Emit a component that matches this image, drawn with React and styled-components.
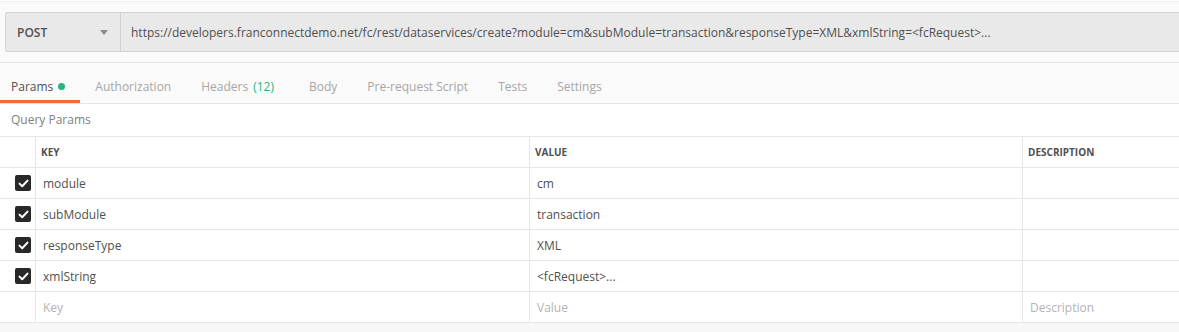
import React from 'react'
import styled, {createGlobalStyle} from 'styled-components'

const GlobalStyle = createGlobalStyle`
  html, body {
    margin: 0;
    padding: 0;
    background: #f7f7f7;
    font-family: "Open Sans", "Liberation Sans", sans-serif;
    color: #505050;
  }
`

const params = [
  {key: 'module', value: 'cm'},
  {key: 'subModule', value: 'transaction'},
  {key: 'responseType', value: 'XML'},
  {key: 'xmlString', value: '<fcRequest>...'},
]

const Page = styled.div`
  width: 1179px;
  display: flex;
  flex-direction: column;
`

const Top = styled.div`
  background: #fafafa;
  border-top: 1px solid #fff;
  box-shadow: inset 0 1px 0 #eeeeee;
  padding: 11px 0 10px 5px;
  border-bottom: 1px solid #e6e6e6;
`

const RequestBar = styled.div`
  display: flex;
  height: 38px;
  border: 1px solid #d2d2d2;
  border-right: none;
  background: #e9e9e9;
  border-radius: 2px 0 0 2px;
`

const Method = styled.div`
  width: 115px;
  display: flex;
  align-items: center;
  justify-content: space-between;
  padding: 0 12px 0 11px;
  box-sizing: border-box;
  border-right: 1px solid #d2d2d2;
  font-size: 12px;
  font-weight: 600;
  color: #505050;
`

const Caret = styled.span`
  width: 0;
  height: 0;
  border-left: 4px solid transparent;
  border-right: 4px solid transparent;
  border-top: 5px solid #8a8a8a;
  margin-top: 1px;
`

const Url = styled.div`
  flex: 1;
  display: flex;
  align-items: center;
  padding-left: 10px;
  font-size: 12px;
  color: #505050;
  white-space: nowrap;
`

const Tabs = styled.div`
  display: flex;
  height: 40px;
  background: #fafafa;
  border-bottom: 1px solid #e6e6e6;
`

const Tab = styled.div`
  display: flex;
  align-items: center;
  gap: 5px;
  padding: 9px 15px 0;
  font-size: 12px;
  color: ${p => (p.$active ? '#505050' : '#a6a6a6')};
  border-bottom: 3px solid ${p => (p.$active ? '#f26b3a' : 'transparent')};
  &:first-child {
    padding-left: 11px;
  }
`

const Dot = styled.span`
  width: 7px;
  height: 7px;
  border-radius: 50%;
  background: #26b47f;
`

const Count = styled.span`
  color: #26b47f;
  margin-right: 5px;
`

const Section = styled.div`
  background: #fff;
  height: 33px;
  display: flex;
  align-items: center;
  padding: 0 0 1px 11px;
  box-sizing: border-box;
  font-size: 12px;
  color: #808080;
  border-bottom: 1px solid #e6e6e6;
`

const Table = styled.div`
  background: #fff;
  display: grid;
  grid-template-columns: 35px 494px 493px 1fr;
`

const Cell = styled.div`
  height: 30px;
  display: flex;
  align-items: center;
  padding-left: ${p => (p.$head ? '5px' : '7px')};
  font-size: ${p => (p.$head ? '10px' : '12px')};
  font-weight: ${p => (p.$head ? 700 : 400)};
  color: ${p => (p.$placeholder ? '#b3b3b3' : '#505050')};
  border-bottom: 1px solid #e6e6e6;
  border-left: ${p => (p.$first ? 'none' : '1px solid #e6e6e6')};
  white-space: nowrap;
  overflow: hidden;
`

const CheckCell = styled(Cell)`
  padding-left: 15px;
`

const Check = styled.span`
  width: 16px;
  height: 16px;
  border-radius: 2px;
  background: #282828;
  display: flex;
  align-items: center;
  justify-content: center;
`

const Bottom = styled.div`
  height: 10px;
  background: #f7f7f7;
`

function CheckMark() {
  return (
    <Check>
      <svg width="11" height="9" viewBox="0 0 11 9">
        <path d="M1.5 4.6 L4.2 7.2 L9.5 1.6" fill="none" stroke="#fff" strokeWidth="2" strokeLinecap="round" strokeLinejoin="round" />
      </svg>
    </Check>
  )
}

export default function App() {
  return (
    <Page>
      <GlobalStyle />
      <Top>
        <RequestBar>
          <Method>POST<Caret /></Method>
          <Url>https://developers.franconnectdemo.net/fc/rest/dataservices/create?module=cm&amp;subModule=transaction&amp;responseType=XML&amp;xmlString=&lt;fcRequest&gt;...</Url>
        </RequestBar>
      </Top>
      <Tabs>
        <Tab $active>Params<Dot /></Tab>
        <Tab>Authorization</Tab>
        <Tab>Headers <Count>(12)</Count></Tab>
        <Tab>Body</Tab>
        <Tab>Pre-request Script</Tab>
        <Tab>Tests</Tab>
        <Tab>Settings</Tab>
      </Tabs>
      <Section>Query Params</Section>
      <Table>
        <Cell $first $head />
        <Cell $head>KEY</Cell>
        <Cell $head>VALUE</Cell>
        <Cell $head>DESCRIPTION</Cell>
        {params.map(p => (
          <React.Fragment key={p.key}>
            <CheckCell $first><CheckMark /></CheckCell>
            <Cell>{p.key}</Cell>
            <Cell>{p.value}</Cell>
            <Cell />
          </React.Fragment>
        ))}
        <Cell $first />
        <Cell $placeholder>Key</Cell>
        <Cell $placeholder>Value</Cell>
        <Cell $placeholder>Description</Cell>
      </Table>
      <Bottom />
    </Page>
  )
}
